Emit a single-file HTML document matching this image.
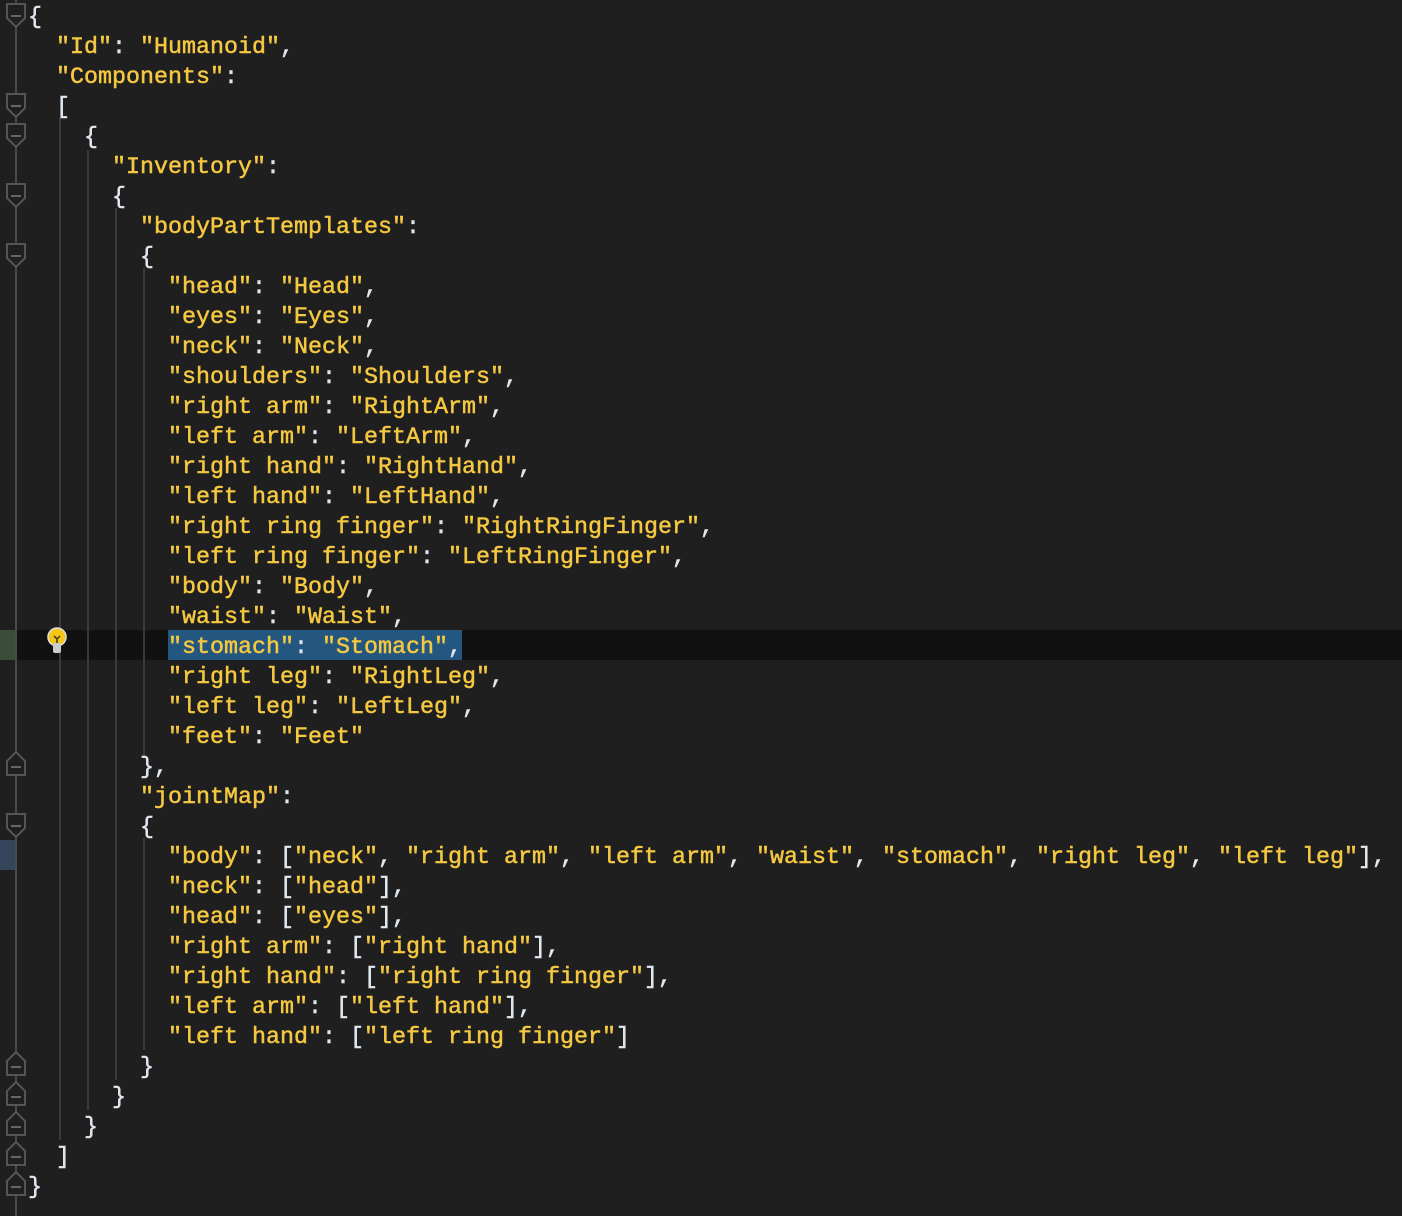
<!DOCTYPE html>
<html><head><meta charset="utf-8"><style>
body{margin:0;width:1402px;height:1216px;background:#1f1f1f;overflow:hidden;position:relative;font-family:"Liberation Mono",monospace;}
.l{position:absolute;left:0;height:30px;line-height:30px;padding-top:3px;font-size:23.33px;white-space:pre;color:#dfe6ee;-webkit-text-stroke:0.5px currentColor;}
.s{color:#f5c842}
.g{position:absolute;width:2px;background:#3a3a3a}
</style></head><body>
<div style="position:absolute;left:0;top:630px;width:1402px;height:30px;background:#111"></div>
<div style="position:absolute;left:0;top:630px;width:15px;height:30px;background:#3a4d38"></div>
<div style="position:absolute;left:0;top:840px;width:15px;height:30px;background:#34455a"></div>
<div style="position:absolute;left:168px;top:630px;width:294px;height:30px;background:#24577f"></div>
<div class="g" style="left:15px;top:0;height:1216px;background:#4a4a4a"></div>
<div class="g" style="left:59px;top:118px;height:1022px"></div>
<div class="g" style="left:87px;top:150px;height:960px"></div>
<div class="g" style="left:115px;top:208px;height:872px"></div>
<div class="g" style="left:143px;top:268px;height:488px"></div>
<div class="g" style="left:143px;top:838px;height:212px"></div>
<svg style="position:absolute;left:0;top:0" width="30" height="1216">
<g fill="#1f1f1f" stroke="#555" stroke-width="2">
<path d="M7 4h18v14l-9 9l-9-9z"/>
<path d="M7 94h18v14l-9 9l-9-9z"/>
<path d="M7 124h18v14l-9 9l-9-9z"/>
<path d="M7 184h18v14l-9 9l-9-9z"/>
<path d="M7 244h18v14l-9 9l-9-9z"/>
<path d="M7 814h18v14l-9 9l-9-9z"/>
<path d="M7 775h18v-14l-9-9l-9 9z"/>
<path d="M7 1075h18v-14l-9-9l-9 9z"/>
<path d="M7 1105h18v-14l-9-9l-9 9z"/>
<path d="M7 1135h18v-14l-9-9l-9 9z"/>
<path d="M7 1165h18v-14l-9-9l-9 9z"/>
<path d="M7 1195h18v-14l-9-9l-9 9z"/>
</g>
<g stroke="#666" stroke-width="2">
<path d="M11 16h10M11 106h10M11 136h10M11 196h10M11 256h10M11 826h10M11 767h10M11 1067h10M11 1097h10M11 1127h10M11 1157h10M11 1187h10"/>
</g></svg>
<svg style="position:absolute;left:46px;top:626px" width="22" height="30">
<circle cx="11" cy="11" r="9" fill="#f5c518" stroke="#ddd" stroke-width="1.5"/>
<rect x="7" y="17" width="8" height="10" rx="2" fill="#ccc"/>
<path d="M8 10l3 3l3-3M11 13v4" stroke="#333" stroke-width="1.5" fill="none"/>
</svg>
<div class="l" style="top:0">  {</div>
<div class="l" style="top:30px">    <span class="s">"Id"</span>: <span class="s">"Humanoid"</span>,</div>
<div class="l" style="top:60px">    <span class="s">"Components"</span>:</div>
<div class="l" style="top:90px">    [</div>
<div class="l" style="top:120px">      {</div>
<div class="l" style="top:150px">        <span class="s">"Inventory"</span>:</div>
<div class="l" style="top:180px">        {</div>
<div class="l" style="top:210px">          <span class="s">"bodyPartTemplates"</span>:</div>
<div class="l" style="top:240px">          {</div>
<div class="l" style="top:270px">            <span class="s">"head"</span>: <span class="s">"Head"</span>,</div>
<div class="l" style="top:300px">            <span class="s">"eyes"</span>: <span class="s">"Eyes"</span>,</div>
<div class="l" style="top:330px">            <span class="s">"neck"</span>: <span class="s">"Neck"</span>,</div>
<div class="l" style="top:360px">            <span class="s">"shoulders"</span>: <span class="s">"Shoulders"</span>,</div>
<div class="l" style="top:390px">            <span class="s">"right arm"</span>: <span class="s">"RightArm"</span>,</div>
<div class="l" style="top:420px">            <span class="s">"left arm"</span>: <span class="s">"LeftArm"</span>,</div>
<div class="l" style="top:450px">            <span class="s">"right hand"</span>: <span class="s">"RightHand"</span>,</div>
<div class="l" style="top:480px">            <span class="s">"left hand"</span>: <span class="s">"LeftHand"</span>,</div>
<div class="l" style="top:510px">            <span class="s">"right ring finger"</span>: <span class="s">"RightRingFinger"</span>,</div>
<div class="l" style="top:540px">            <span class="s">"left ring finger"</span>: <span class="s">"LeftRingFinger"</span>,</div>
<div class="l" style="top:570px">            <span class="s">"body"</span>: <span class="s">"Body"</span>,</div>
<div class="l" style="top:600px">            <span class="s">"waist"</span>: <span class="s">"Waist"</span>,</div>
<div class="l" style="top:630px">            <span class="s">"stomach"</span>: <span class="s">"Stomach"</span>,</div>
<div class="l" style="top:660px">            <span class="s">"right leg"</span>: <span class="s">"RightLeg"</span>,</div>
<div class="l" style="top:690px">            <span class="s">"left leg"</span>: <span class="s">"LeftLeg"</span>,</div>
<div class="l" style="top:720px">            <span class="s">"feet"</span>: <span class="s">"Feet"</span></div>
<div class="l" style="top:750px">          },</div>
<div class="l" style="top:780px">          <span class="s">"jointMap"</span>:</div>
<div class="l" style="top:810px">          {</div>
<div class="l" style="top:840px">            <span class="s">"body"</span>: [<span class="s">"neck"</span>, <span class="s">"right arm"</span>, <span class="s">"left arm"</span>, <span class="s">"waist"</span>, <span class="s">"stomach"</span>, <span class="s">"right leg"</span>, <span class="s">"left leg"</span>],</div>
<div class="l" style="top:870px">            <span class="s">"neck"</span>: [<span class="s">"head"</span>],</div>
<div class="l" style="top:900px">            <span class="s">"head"</span>: [<span class="s">"eyes"</span>],</div>
<div class="l" style="top:930px">            <span class="s">"right arm"</span>: [<span class="s">"right hand"</span>],</div>
<div class="l" style="top:960px">            <span class="s">"right hand"</span>: [<span class="s">"right ring finger"</span>],</div>
<div class="l" style="top:990px">            <span class="s">"left arm"</span>: [<span class="s">"left hand"</span>],</div>
<div class="l" style="top:1020px">            <span class="s">"left hand"</span>: [<span class="s">"left ring finger"</span>]</div>
<div class="l" style="top:1050px">          }</div>
<div class="l" style="top:1080px">        }</div>
<div class="l" style="top:1110px">      }</div>
<div class="l" style="top:1140px">    ]</div>
<div class="l" style="top:1170px">  }</div>
</body></html>
